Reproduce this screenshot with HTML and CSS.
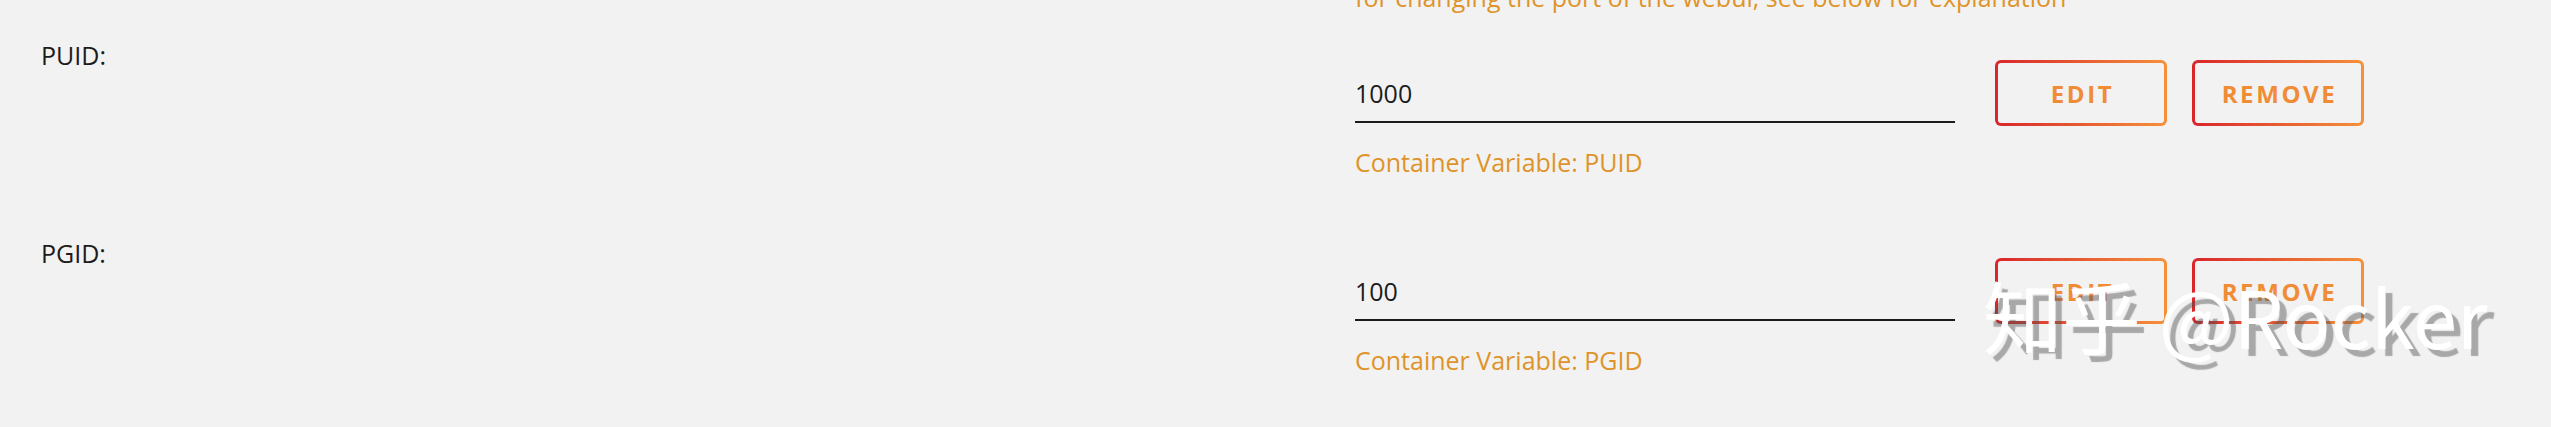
FILE: index.html
```html
<!DOCTYPE html>
<html lang="en">
<head>
<meta charset="utf-8">
<title>Container settings</title>
<link rel="stylesheet" href="styles.css">
</head>
<body>
<div class="page">
  <div class="row tail">
    <div class="label"></div>
    <div class="content">
      <div class="desc">for changing the port of the webui, see below for explanation</div>
    </div>
  </div>

  <div class="row">
    <div class="label">PUID:</div>
    <div class="content">
      <div class="field-line">
        <div class="value">1000</div>
        <button class="btn">Edit</button>
        <button class="btn">Remove</button>
      </div>
      <div class="desc">Container Variable: PUID</div>
    </div>
  </div>

  <div class="row">
    <div class="label">PGID:</div>
    <div class="content">
      <div class="field-line">
        <div class="value">100</div>
        <button class="btn">Edit</button>
        <button class="btn">Remove</button>
      </div>
      <div class="desc">Container Variable: PGID</div>
    </div>
  </div>

  <div class="watermark">知乎 @Rocker</div>
</div>
</body>
</html>
```

FILE: styles.css
```css
html, body {
  margin: 0;
  padding: 0;
  background: #f2f2f2;
}

body {
  font-family: "Open Sans", "Noto Sans", sans-serif;
  font-size: 25px;
  line-height: 34px;
  color: #1c1c1c;
  overflow: hidden;
  height: 427px;
}

.page {
  position: relative;
  margin-top: -20px;
  padding-left: 41px;
}

.row {
  display: grid;
  grid-template-columns: 1314px 1fr;
  padding-top: 24px;
  padding-bottom: 33px;
}

.row.tail {
  padding-top: 0;
  padding-bottom: 0;
}

.label {
  color: #1c1c1c;
}

.content {
  display: flex;
  flex-direction: column;
}

.field-line {
  display: flex;
  align-items: flex-start;
  margin-top: 22px;
}

.value {
  width: 600px;
  margin-top: 16px;
  padding-bottom: 11px;
  border-bottom: 2px solid #1c1c1c;
  margin-right: 40px;
}

.btn {
  box-sizing: border-box;
  width: 172px;
  height: 66px;
  margin-right: 25px;
  padding: 0 0 0 3px;
  border: 3px solid transparent;
  border-radius: 6px;
  background:
    linear-gradient(#f2f2f2, #f2f2f2) padding-box,
    linear-gradient(90deg, #d9262b, #f5913a) border-box;
  font-family: "Open Sans", "Noto Sans", sans-serif;
  font-weight: 700;
  font-size: 24px;
  letter-spacing: 2.6px;
  text-transform: uppercase;
  color: #f08c36;
  display: flex;
  align-items: center;
  justify-content: center;
}

.desc {
  color: #de942a;
  margin-top: 19px;
}

.row.tail .desc {
  margin-top: 0;
}

.watermark {
  position: absolute;
  left: 1983px;
  top: 295px;
  font-family: "Noto Sans CJK SC", "Noto Sans", sans-serif;
  font-size: 79px;
  line-height: 1;
  color: #ffffff;
  white-space: nowrap;
  text-shadow: 7px 7px 1px rgba(80, 80, 80, 0.46);
}
```
